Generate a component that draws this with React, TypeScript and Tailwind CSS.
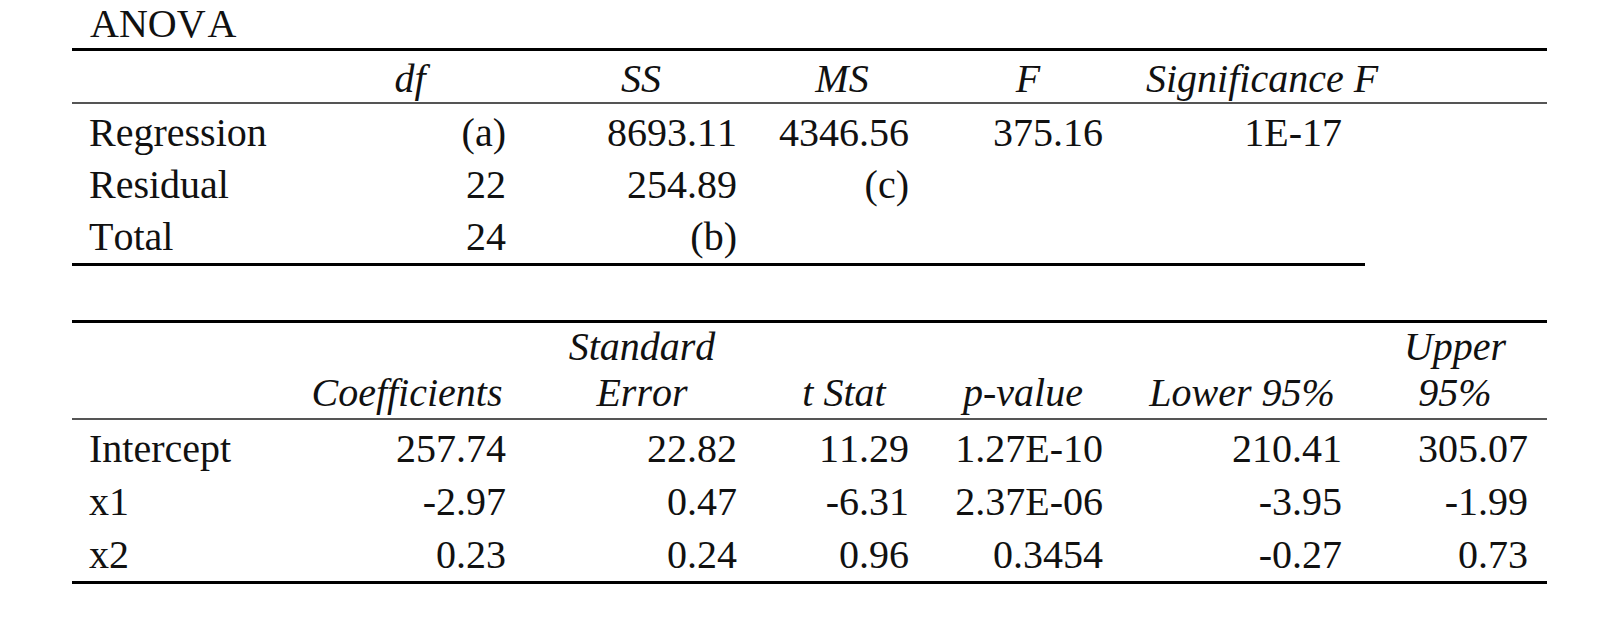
import React from 'react';

// shared column grid for both tables (label + 6 numeric columns)
const COLS = 'grid grid-cols-[234px_204px_232px_171px_195px_240px_199px]';

// right padding of the numbers in each numeric column
const valuePad = ['pr-[4px]', 'pr-[5px]', 'pr-[4px]', 'pr-[5px]', 'pr-[6px]', 'pr-[19px]'];

type Row = { label: string; values: string[] };

const anovaHead = [
  { text: 'df', pad: 'pl-[4px]' },
  { text: 'SS', pad: 'pl-[30px]' },
  { text: 'MS', pad: 'pl-[29px]' },
  { text: 'F', pad: 'pl-[35px]' },
  { text: 'Significance F', pad: 'pl-[68px]' },
  { text: '', pad: '' },
];

const anovaRows: Row[] = [
  { label: 'Regression', values: ['(a)', '8693.11', '4346.56', '375.16', '1E-17', ''] },
  { label: 'Residual', values: ['22', '254.89', '(c)', '', '', ''] },
  { label: 'Total', values: ['24', '(b)', '', '', '', ''] },
];

const coefHead = [
  { lines: ['Coefficients'], pad: 'pr-[2px]' },
  { lines: ['Standard', 'Error'], pad: 'pl-[32px]' },
  { lines: ['t Stat'], pad: 'pl-[33px]' },
  { lines: ['p-value'], pad: 'pl-[25px]' },
  { lines: ['Lower 95%'], pad: 'pl-[28px]' },
  { lines: ['Upper', '95%'], pad: 'pl-[15px]' },
];

const coefRows: Row[] = [
  { label: 'Intercept', values: ['257.74', '22.82', '11.29', '1.27E-10', '210.41', '305.07'] },
  { label: 'x1', values: ['-2.97', '0.47', '-6.31', '2.37E-06', '-3.95', '-1.99'] },
  { label: 'x2', values: ['0.23', '0.24', '0.96', '0.3454', '-0.27', '0.73'] },
];

const DataRow: React.FC<{ row: Row; height: string }> = ({ row, height }) => (
  <div className={`${COLS} ${height} whitespace-nowrap`}>
    <div className="pl-[17px]">{row.label}</div>
    {row.values.map((v, i) => (
      <div key={i} className={`text-right ${valuePad[i]}`}>
        {v}
      </div>
    ))}
  </div>
);

const App: React.FC = () => {
  return (
    <div className="min-h-screen w-[1606px] bg-white text-[#111] font-['Liberation_Serif','Times_New_Roman',serif] text-[40px] [font-kerning:none]">
      <div className="pl-[72px]">
        {/* ANOVA table */}
        <div className="h-[48px] leading-[48px] pl-[18px]">
          ANOV<span className="ml-[2px]">A</span>
        </div>
        <div className="w-[1475px]">
          <div className={`${COLS} h-[56px] items-end border-t-[3px] border-b-2 border-t-black border-b-[#555] italic`}>
            <div />
            {anovaHead.map((h, i) => (
              <div key={i} className={`flex justify-center whitespace-nowrap leading-[40px] pb-[3px] ${h.pad}`}>
                {h.text}
              </div>
            ))}
          </div>
          <div className="pt-[3px]">
            {anovaRows.map(r => (
              <DataRow key={r.label} row={r} height="h-[52px] leading-[52px]" />
            ))}
          </div>
          <div className="w-[1293px] h-[3px] bg-black" />
        </div>

        {/* coefficients table */}
        <div className="w-[1475px] mt-[54px]">
          <div className={`${COLS} h-[100px] items-end border-t-[3px] border-b-2 border-t-black border-b-[#555] italic`}>
            <div />
            {coefHead.map((h, i) => (
              <div key={i} className={`flex justify-center whitespace-nowrap leading-[46px] pb-[2px] ${h.pad}`}>
                <div className="text-center">
                  {h.lines.map(l => (
                    <div key={l}>{l}</div>
                  ))}
                </div>
              </div>
            ))}
          </div>
          <div className="pt-[2px] border-b-[3px] border-black">
            {coefRows.map(r => (
              <DataRow key={r.label} row={r} height="h-[53px] leading-[53px]" />
            ))}
          </div>
        </div>
      </div>
    </div>
  );
};

export default App;
